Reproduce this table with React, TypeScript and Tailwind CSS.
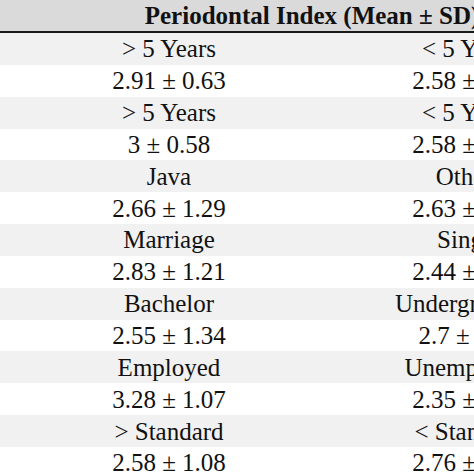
import React from "react";

const rows: [string, string][] = [
  ["> 5 Years", "< 5 Years"],
  ["2.91 ± 0.63", "2.58 ± 0.81"],
  ["> 5 Years", "< 5 Years"],
  ["3 ± 0.58", "2.58 ± 0.85"],
  ["Java", "Others"],
  ["2.66 ± 1.29", "2.63 ± 1.16"],
  ["Marriage", "Single"],
  ["2.83 ± 1.21", "2.44 ± 1.18"],
  ["Bachelor", "Undergraduate"],
  ["2.55 ± 1.34", "2.7 ± 1.12"],
  ["Employed", "Unemployed"],
  ["3.28 ± 1.07", "2.35 ± 1.22"],
  ["> Standard", "< Standard"],
  ["2.58 ± 1.08", "2.76 ± 1.31"],
];

export default function App() {
  return (
    <div className="w-[474px] h-[474px] overflow-hidden bg-white text-[#111]">
      <div className="w-[624px] flex flex-col">
        <div className="h-[31px] bg-[#dadada] flex items-center justify-center">
          <span className="font-['Liberation_Serif',serif] text-[25px] font-bold leading-none">
            Periodontal Index (Mean ± SD)
          </span>
        </div>
        <div className="h-[2px] bg-[#1a1a1a]" />
        {rows.map(([a, b], i) => (
          <div
            key={i}
            className={`h-[31.85px] shrink-0 grid grid-cols-[338px_262px_24px] items-center ${
              i % 2 === 0 ? "bg-[#f1f1f1]" : "bg-white"
            }`}
          >
            <span className="font-['Liberation_Serif',serif] text-[25px] leading-none text-center whitespace-nowrap">
              {a}
            </span>
            <span className="font-['Liberation_Serif',serif] text-[25px] leading-none text-center whitespace-nowrap">
              {b}
            </span>
            <span />
          </div>
        ))}
      </div>
    </div>
  );
}
